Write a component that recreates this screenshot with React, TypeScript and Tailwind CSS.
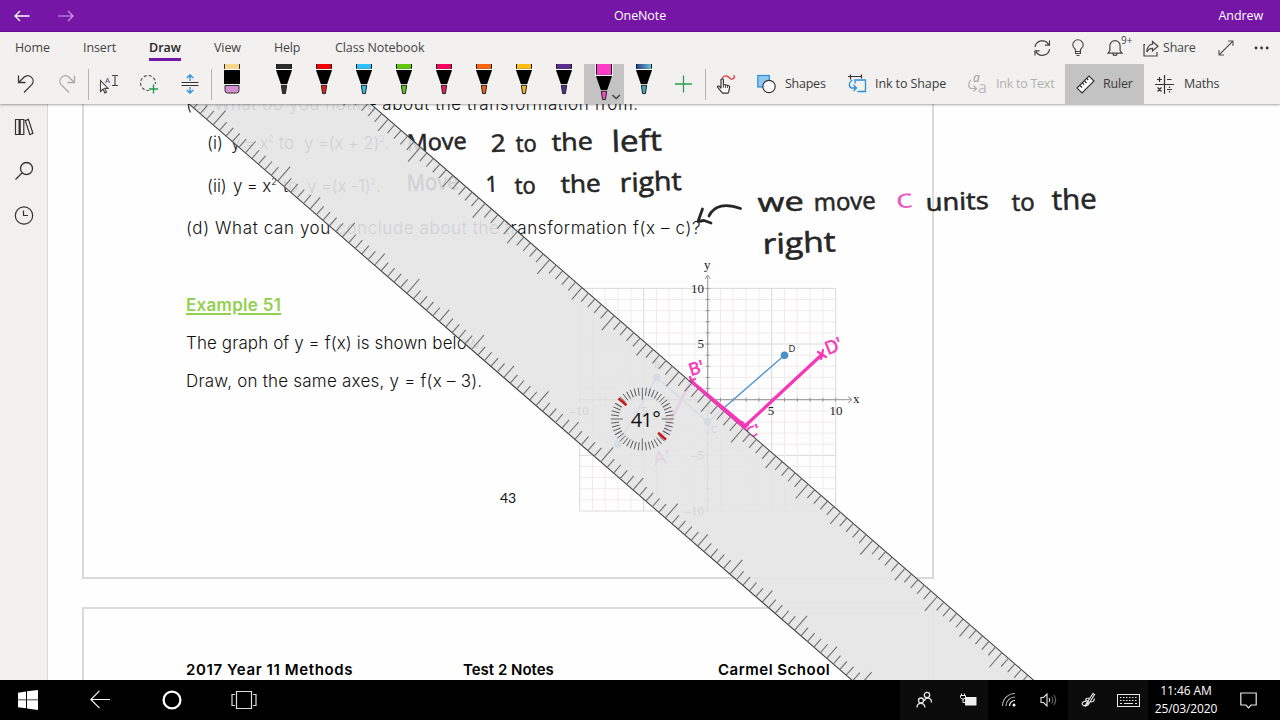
import React from 'react'

interface InkWord {
  text: string
  x: number
  y: number
  width: number
  size?: number
  color?: string
  rotate?: number
}

const INK = '#262626'
const PINK = '#f537b8'

const tabs = [
  { label: 'Home', className: 'w-[68px] tracking-[-0.1px]' },
  { label: 'Insert', className: 'w-[66px] tracking-[-0.1px]' },
  { label: 'Draw', className: 'w-[65px] font-semibold text-[#262626]' },
  { label: 'View', className: 'w-[60px] tracking-[-0.1px]' },
  { label: 'Help', className: 'w-[61px] tracking-[-0.2px]' },
  { label: 'Class Notebook', className: 'w-[100px] tracking-[-0.1px]' },
]

const pens = [
  { cap: '#2b2b2b', tip: '#333333' },
  { cap: '#f40000', tip: '#e0201c' },
  { cap: '#2fc1fb', tip: '#35bdf0' },
  { cap: '#5fc80c', tip: '#63c41b' },
  { cap: '#f7005e', tip: '#e21f62' },
  { cap: '#f9650c', tip: '#e9601a' },
  { cap: '#fdbd10', tip: '#f0b429' },
  { cap: '#5b2d90', tip: '#54308a' },
  { cap: '#ff3cc8', tip: '#f04fc0', selected: true },
  { cap: 'url(#galaxy)', tip: '#3ea7bb' },
]

const inkWords: InkWord[] = [
  { text: 'Move', x: 407, y: 151, width: 60, size: 23 },
  { text: '2', x: 491, y: 152, width: 15, size: 24 },
  { text: 'to', x: 516, y: 152, width: 21, size: 23 },
  { text: 'the', x: 552, y: 151, width: 41 },
  { text: 'left', x: 612, y: 152, width: 50, size: 29 },
  { text: 'Move', x: 407, y: 191, width: 52, size: 23 },
  { text: '1', x: 486, y: 192, width: 12, size: 22 },
  { text: 'to', x: 515, y: 194, width: 21, size: 23 },
  { text: 'the', x: 561, y: 193, width: 40 },
  { text: 'right', x: 620, y: 192, width: 62, size: 26 },
  { text: 'we', x: 758, y: 212, width: 46, size: 26 },
  { text: 'move', x: 814, y: 211, width: 62, size: 24 },
  { text: 'c', x: 896, y: 208, width: 17, size: 26, color: '#e85cc4' },
  { text: 'units', x: 926, y: 211, width: 63, size: 24 },
  { text: 'to', x: 1012, y: 211, width: 23 },
  { text: 'the', x: 1052, y: 210, width: 45, size: 28 },
  { text: 'right', x: 763, y: 254, width: 73, size: 28 },
  { text: "D'", x: 828, y: 355, width: 17, size: 18, color: PINK, rotate: -22 },
  { text: "B'", x: 691, y: 376, width: 15, size: 17, color: PINK, rotate: -18 },
  { text: "C'", x: 748, y: 439, width: 15, size: 14, color: PINK, rotate: -25 },
  { text: "A'", x: 655, y: 465, width: 16, size: 18, color: PINK, rotate: -10 },
]

function Pen({ cap, tip, selected }: { cap: string; tip: string; selected?: boolean }) {
  const d = selected ? 6 : 0
  return (
    <div className={selected ? 'h-10 w-10 bg-[#c3c3c3]' : 'h-10 w-10'}>
      <svg width="40" height="40" viewBox="0 0 40 40">
        <rect x="11" y="0" width="18" height={6 + d} fill="#fff" opacity="0.8" />
        <rect x="12" y="0" width="16" height={4.8 + d} fill="#111" />
        <rect x="13" y="0" width="14" height={4.8 + d} fill={cap} />
        <path d={`M12 ${6 + d}H28L23.2 ${20 + d}H16.8Z`} fill="#000" />
        <path d={`M17.3 ${21.3 + d}H22.7L21.4 ${29.6 + d}H18.6Z`} fill={tip} stroke="#222" strokeWidth="1" />
        {selected && <path d="M28.5 31l3.7 3.7 3.7-3.7" fill="none" stroke="#333" strokeWidth="1.3" />}
      </svg>
    </div>
  )
}

function Separator({ className = '' }: { className?: string }) {
  return <div className={`h-[31px] w-px bg-[#b5b5b5] ${className}`} />
}

function TitleBar() {
  return (
    <header className="flex h-8 shrink-0 items-center border-b border-[#640f92] bg-[#7616a7] text-[12.5px] text-white">
      <div className="flex w-[200px] items-center pl-3.5">
        <svg width="16" height="12" viewBox="0 0 16 12" fill="none" stroke="#fff" strokeWidth="1.3">
          <path d="M15.5 6H1M6 1L1 6l5 5" />
        </svg>
        <svg className="ml-7" width="16" height="12" viewBox="0 0 16 12" fill="none" stroke="#cf9fe6" strokeWidth="1.2">
          <path d="M0 6h14.5M10 1l5 5-5 5" />
        </svg>
      </div>
      <div className="flex-1 pt-0.5 text-center tracking-[-0.1px]">OneNote</div>
      <div className="w-[200px] pr-[17px] pt-0.5 text-right tracking-[-0.1px]">Andrew</div>
    </header>
  )
}

function TabRow() {
  return (
    <nav className="flex h-8 items-center justify-between text-[12.5px] text-[#444]">
      <div className="flex pl-[15px] pt-px">
        {tabs.map((tab) => (
          <div key={tab.label} className={`whitespace-nowrap ${tab.className}`}>
            <span className={tab.label === 'Draw' ? 'relative after:absolute after:-bottom-[5px] after:left-0 after:h-[3px] after:w-full after:bg-[#7316a5]' : ''}>
              {tab.label}
            </span>
          </div>
        ))}
      </div>
      <div className="flex h-8 w-[248px] items-center">
        <svg width="20" height="18" viewBox="0 0 20 18" fill="none" stroke="#444" strokeWidth="1.2">
          <path d="M3 8a7.3 7.3 0 0 1 13.6-2.4M17.5 1.5v4.6h-4.6M17.6 10A7.3 7.3 0 0 1 4 12.6M3 16.5v-4.6h4.6" />
        </svg>
        <svg className="ml-[18px]" width="16" height="18" viewBox="0 0 16 18" fill="none" stroke="#444" strokeWidth="1.1">
          <path d="M5.5 12.5v-2C4 9 2.8 8.2 2.8 6a5.2 5.2 0 0 1 10.4 0c0 2.2-1.2 3-2.7 4.5v2zM5.5 12.5v2h5v-2M6.5 16.5h3" />
        </svg>
        <div className="relative ml-[21px] h-[18px] w-4">
          <svg width="16" height="18" viewBox="0 0 16 18" fill="none" stroke="#444" strokeWidth="1.2">
            <path d="M1 14.2h14l-1.9-2.7V6.8a5.1 5.1 0 0 0-10.2 0v4.7zM6 14.5a2 2 0 0 0 4 0" />
          </svg>
          <span className="absolute -top-[5px] left-[14px] text-[10px] leading-[12px]">9+</span>
        </div>
        <svg className="ml-5" width="17" height="17" viewBox="0 0 17 17" fill="none" stroke="#444" strokeWidth="1.2">
          <path d="M2 4.5H1V16h13v-4M9.5 1.5l5.5 4.7-5.5 4.7V8.3C7 8.3 5 9.5 3.8 12c0-4.5 2.5-7.6 5.7-7.8z" />
        </svg>
        <span className="ml-[3px] tracking-[-0.2px]">Share</span>
        <svg className="ml-[22px]" width="16" height="16" viewBox="0 0 16 16" fill="none" stroke="#555" strokeWidth="1.1">
          <path d="M1 15L15 1M10 1h5v5M1 10v5h5" />
        </svg>
        <svg className="ml-5" width="16" height="4" viewBox="0 0 16 4" fill="#333">
          <circle cx="2" cy="2" r="1.4" />
          <circle cx="7.6" cy="2" r="1.4" />
          <circle cx="13.2" cy="2" r="1.4" />
        </svg>
      </div>
    </nav>
  )
}

function Tool({ children, className = 'w-10' }: { children: React.ReactNode; className?: string }) {
  return <div className={`flex h-10 items-center justify-center ${className}`}>{children}</div>
}

function Toolbar() {
  return (
    <div className="flex h-10 items-center pl-[6px] text-[12.5px] text-[#3a3a3a]">
      <Tool>
        <svg width="18" height="20" viewBox="0 0 18 20" fill="none" stroke="#3a3a3a" strokeWidth="1.3">
          <path d="M1.5 1.5v7h7M1.8 8.2L7 3.2a5.4 5.4 0 0 1 8 7.2L7 18.5" />
        </svg>
      </Tool>
      <Tool className="w-[42px]">
        <svg width="18" height="20" viewBox="0 0 18 20" fill="none" stroke="#a9a9a9" strokeWidth="1.3">
          <path d="M16.5 1.5v7h-7M16.2 8.2L11 3.2a5.4 5.4 0 0 0-8 7.2l8 8.1" />
        </svg>
      </Tool>
      <Separator />
      <Tool className="w-[39px]">
        <svg width="20" height="20" viewBox="0 0 20 20" fill="none" stroke="#444" strokeWidth="1.1">
          <path d="M1.5 6.5v11l2.6-2.5 1.8 4 1.6-.8-1.8-3.8h3.4z" fill="#fff" />
          <path d="M13 1.5h2.3q.7 0 .7.7v8.6q0 .7-.7.7H13M19 1.5h-2.3q-.7 0-.7.7v8.6q0 .7.7.7H19" />
          <text x="6" y="9" fontSize="8" fill="#444" stroke="none">A</text>
        </svg>
      </Tool>
      <Tool className="w-[42px]">
        <svg width="20" height="20" viewBox="0 0 20 20" fill="none">
          <circle cx="9" cy="9" r="7.5" stroke="#555" strokeWidth="1.2" strokeDasharray="3.2 1.9" />
          <path d="M10 10h10v10H10z" fill="#f2f1f0" />
          <path d="M14.5 10.5v9M10 15h9" stroke="#1f9a45" strokeWidth="1.4" />
        </svg>
      </Tool>
      <Tool className="w-[39px]">
        <svg width="18" height="20" viewBox="0 0 18 20" fill="none">
          <path d="M.5 8.5h17M.5 11.5h17" stroke="#333" strokeWidth="1.1" />
          <path d="M9 7V1M5.8 4L9 1l3.2 3M9 13v6M5.8 16L9 19l3.2-3" stroke="#2b8fd6" strokeWidth="1.3" />
        </svg>
      </Tool>
      <Separator className="ml-[2px]" />
      <svg width="40" height="40" viewBox="0 0 40 40">
        <rect x="12" y="0" width="16" height="5" fill="#333" />
        <rect x="13" y="0" width="14" height="5" fill="#f6d58c" />
        <rect x="12" y="5" width="16" height="1" fill="#fff" />
        <rect x="12" y="6" width="16" height="14" fill="#000" />
        <path d="M13 21.5h14v5q0 2.5-2.5 2.5h-9Q13 29 13 26.5z" fill="#d48fd2" stroke="#333" strokeWidth="1" />
      </svg>
      <div className="ml-3 flex">
        {pens.map((pen) => (
          <Pen key={pen.cap} {...pen} />
        ))}
      </div>
      <Tool className="w-[39px]">
        <svg width="17" height="18" viewBox="0 0 17 18" stroke="#2aa14f" strokeWidth="1.3">
          <path d="M8.5.5v17M0 9h17" />
        </svg>
      </Tool>
      <Separator className="ml-[2px]" />
      <Tool>
        <svg width="20" height="20" viewBox="0 0 20 20" fill="none" strokeLinejoin="round" strokeLinecap="round">
          <path d="M6.5 3.8C9 .5 12 2 14 4.2s5.5-.2 4-2.7" stroke="#e2474b" strokeWidth="1.4" />
          <path d="M5 14V6a1.2 1.2 0 0 1 2.4 0v4.5l5 1q1.3.3 1.2 1.7l-.7 4-1 2H6.5l-5-6q0-1.7 1.7-1z" fill="#fff" stroke="#333" strokeWidth="1.2" />
          <path d="M7.4 10.5v3M9.5 11v2.5M11.5 11.5v2" stroke="#333" strokeWidth=".9" />
        </svg>
      </Tool>
      <div className="ml-[11px] flex w-[91px] items-center">
        <svg width="19" height="20" viewBox="0 0 19 20">
          <rect x=".8" y="1.5" width="11.5" height="11.5" fill="#8fc6f2" stroke="#2b8fd6" strokeWidth="1.2" />
          <circle cx="12" cy="12.5" r="6.2" fill="#fff" stroke="#333" strokeWidth="1.2" />
        </svg>
        <span className="ml-[9px] tracking-[-0.25px]">Shapes</span>
      </div>
      <div className="flex w-[120px] items-center whitespace-nowrap">
        <svg width="19" height="20" viewBox="0 0 19 20" fill="none">
          <path d="M0 2.5h14M2.5 .5v5M13.5 .5v4" stroke="#333" strokeWidth="1.2" />
          <path d="M7 9.5V6h10.5v11.5H9.5M4.5 6C1 7.5 0 13 3.5 14H8M5.5 11l3 3-3 3" stroke="#2b8fd6" strokeWidth="1.3" />
        </svg>
        <span className="ml-2 tracking-[-0.1px]">Ink to Shape</span>
      </div>
      <div className="flex w-[97px] items-center whitespace-nowrap text-[#b1b0af]">
        <svg className="overflow-visible" width="20" height="20" viewBox="0 0 20 20" fill="none">
          <text x="5" y="7.5" fontSize="12" fontStyle="italic" fill="#999">a</text>
          <text x="10" y="18.5" fontSize="16" fill="#bbb">a</text>
          <path d="M3 6C.3 7.5-.2 13.5 3 14.5H8M5.5 11.5l3 3-3 3" stroke="#b1b0af" strokeWidth="1.2" />
        </svg>
        <span className="ml-2 tracking-[-0.25px]">Ink to Text</span>
      </div>
      <div className="flex h-10 w-[79px] items-center bg-[#c3c3c3] pl-[11px]">
        <svg width="19" height="19" viewBox="0 0 19 19" fill="#fff" stroke="#333" strokeWidth="1.2">
          <path d="M1 13L13 1l5 5L6 18z" />
          <path d="M4 10.5l2 2M6.5 8l1.5 1.5M8.5 6l2 2M10.8 3.5L12.3 5" />
        </svg>
        <span className="ml-2 tracking-[-0.2px]">Ruler</span>
      </div>
      <div className="ml-[11px] flex items-center">
        <svg width="19" height="19" viewBox="0 0 19 19" fill="none" stroke="#333" strokeWidth="1.2">
          <path d="M9.5 0v19M0 9.5h19M2 4.5h5M4.5 2v5M12 4.5h4.5M2.5 12.5l4 4M6.5 12.5l-4 4M12 14.5h5M14.5 11.5v1.5M14.5 16v1.5" />
        </svg>
        <span className="ml-[10px] tracking-[-0.2px]">Maths</span>
      </div>
    </div>
  )
}

function Sidebar() {
  return (
    <aside className="flex w-12 shrink-0 flex-col items-center gap-6 border-r border-[#d8d8d8] bg-[#f1f0ef] pt-[13px]">
      <svg width="20" height="20" viewBox="0 0 20 20" fill="none" stroke="#333" strokeWidth="1.2">
        <path d="M1.5 2.5h3.6v15H1.5zM6.2 2.5h3.6v15H6.2zM11.3 3.6l3.1-1.2 4.5 13.9-3.1 1.2z" />
      </svg>
      <svg width="20" height="20" viewBox="0 0 20 20" fill="none" stroke="#333" strokeWidth="1.3">
        <circle cx="12.5" cy="7.5" r="6" />
        <path d="M8 12l-6.5 6.5" />
      </svg>
      <svg width="20" height="20" viewBox="0 0 20 20" fill="none" stroke="#333" strokeWidth="1.2">
        <circle cx="10" cy="10.5" r="8.7" />
        <path d="M9.5 5.5v5h4.5" />
      </svg>
    </aside>
  )
}

function Line({ children, className }: { children: React.ReactNode; className: string }) {
  return <p className={`h-5 whitespace-pre text-[17px] font-light leading-5 ${className}`}>{children}</p>
}

function Sup() {
  return <span className="relative -top-[7px] text-[9px]">2</span>
}

function NotePages() {
  return (
    <div className="flex flex-col pl-[34px] font-[Inter,sans-serif] text-[#111]">
      <section className="h-[475px] w-[852px] border-2 border-t-0 border-[#dadadc] pl-[102px]">
        <Line className="-mt-[10px] tracking-[0.55px]">(c) What do you notice about the transformation from:</Line>
        <Line className="mt-[19px] flex pl-[21px]">
          <span className="w-[24px]">(i)</span>
          <span className="w-[48px] tracking-[-0.4px]">y = x<Sup /></span>
          <span className="w-[25px]">to</span>
          <span className="tracking-[-0.2px]">y =(x + 2)<Sup />.</span>
        </Line>
        <Line className="mt-[23px] flex pl-[21px]">
          <span className="w-[26px]">(ii)</span>
          <span className="w-[50px] tracking-[-0.2px]">y = x<Sup /></span>
          <span className="w-[24px]">to</span>
          <span className="tracking-[-0.2px]">y =(x -1)<Sup />.</span>
        </Line>
        <Line className="mt-[22px] tracking-[0.6px]">(d) What can you conclude about the transformation f(x – c)?</Line>
        <Line className="mt-[57px] tracking-[0.3px]">
          <span className="font-semibold text-[#92d050] underline decoration-2 underline-offset-2">Example 51</span>
        </Line>
        <Line className="mt-[18px] tracking-[0.1px]">The graph of y = f(x) is shown below.</Line>
        <Line className="mt-[18px] tracking-[0.22px]">Draw, on the same axes, y = f(x – 3).</Line>
        <p className="mt-[97px] pl-[314px] font-[Lato,sans-serif] text-[14px] leading-5">43</p>
      </section>
      <section className="mt-[28px] flex h-[80px] w-[852px] border-2 border-[#dadadc] pl-[102px] pt-[51px] text-[15px] font-semibold leading-5 text-black">
        <span className="w-[277px] tracking-[0.6px]">2017 Year 11 Methods</span>
        <span className="w-[255px]">Test 2 Notes</span>
        <span className="tracking-[0.5px]">Carmel School</span>
      </section>
    </div>
  )
}

// Origin at (707.7, 399.7), 12.8px per unit across and 11.13px per unit up
const gx = (n: number) => 707.7 + n * 12.8
const gy = (n: number) => 399.7 - n * 11.13

function Graph() {
  const units = Array.from({ length: 21 }, (_, i) => i - 10)
  return (
    <g>
      {units.map((n) => (
        <g key={n} stroke={n % 5 === 0 ? '#dcd8d8' : '#f0ebeb'} strokeWidth="1">
          <path d={`M${gx(n)} ${gy(10)}V${gy(-10)}`} />
          <path d={`M${gx(-10)} ${gy(n)}H${gx(10)}`} />
        </g>
      ))}
      <g stroke="#959595" fill="none">
        {units.map((n) => (
          <path key={n} d={`M${gx(n)} ${gy(0) - 2}v4M${gx(0) - 2} ${gy(n)}h4`} />
        ))}
        <path d={`M${gx(-10)} ${gy(0)}H851M848 ${gy(0) - 3}l4 3-4 3`} />
        <path d={`M${gx(0)} ${gy(-10)}V276M705 279l2.7-4 2.7 4`} />
      </g>
      <g fontFamily="Liberation Serif, serif" fontSize="13" fill="#222">
        <text x="704" y="269">y</text>
        <text x="853" y="403">x</text>
        <text x="704" y="293" textAnchor="end">10</text>
        <text x="704" y="348" textAnchor="end">5</text>
        <text x="704" y="459" textAnchor="end">–5</text>
        <text x="704" y="515" textAnchor="end">–10</text>
        <text x="771" y="415" textAnchor="middle">5</text>
        <text x="836" y="415" textAnchor="middle">10</text>
        <text x="641" y="415" textAnchor="middle">–5</text>
        <text x="579" y="415" textAnchor="middle">–10</text>
      </g>
      <path
        d={`M${gx(-7)} ${gy(-4)}L${gx(-4)} ${gy(2)}L${gx(0)} ${gy(-2)}L${gx(6)} ${gy(4)}`}
        fill="none"
        stroke="#5a9bd0"
        strokeWidth="1.4"
      />
      {[[-7, -4], [-4, 2], [0, -2], [6, 4]].map(([x, y]) => (
        <circle key={x} cx={gx(x)} cy={gy(y)} r="3.8" fill="#4a8fc6" />
      ))}
      <g fontFamily="Open Sans, sans-serif" fontSize="9.5" fill="#222">
        <text x="788.5" y="352">D</text>
        <text x="654" y="368">B</text>
        <text x="711" y="433">C</text>
      </g>
    </g>
  )
}

function Ruler() {
  const ticks = Array.from({ length: 181 }, (_, i) => i - 90)
  const dial = Array.from({ length: 48 }, (_, i) => i * 7.5).filter((a) => a !== 127.5 && a !== 307.5)
  return (
    <g transform="translate(642.3 419)">
      <g transform="rotate(41)">
        <rect x="-800" y="-59.6" width="1600" height="119.2" fill="#e4e4e5" fillOpacity="0.9" />
        <path d="M-800-59.6H800M-800 59.6H800" stroke="#3a3a3a" strokeWidth="1" />
        {ticks.map((n) => {
          const x = -3.3 + n * 8.56
          const len = n % 10 === 0 ? 19 : n % 5 === 0 ? 15.5 : 11
          return <path key={n} d={`M${x} -59.6v${len}M${x} 59.6v${-len}`} stroke="#707070" strokeWidth="1.1" />
        })}
      </g>
      {dial.map((a) => (
        <path key={a} d={a % 90 === 0 ? 'M0-31.5v12' : 'M0-31.5v8'} transform={`rotate(${a})`} stroke="#555" strokeWidth="0.9" />
      ))}
      <path d="M-31.5 0h10.5M31.5 0h-10.5" transform="rotate(41)" stroke="#c81414" strokeWidth="2.4" />
      <text x="-11.5" y="8" fontSize="20" fontFamily="Open Sans, sans-serif" fill="#111" textLength="22">41</text>
      <text x="10" y="7" fontSize="20" fontFamily="Open Sans, sans-serif" fill="#111">°</text>
    </g>
  )
}

function InkLayer() {
  return (
    <svg className="absolute left-0 top-0" width="1232" height="576" viewBox="48 104 1232 576">
      <Graph />
      <g fontFamily="Open Sans, sans-serif" fontWeight="500" strokeWidth="0.6" strokeLinejoin="round">
        {inkWords.map((w) => (
          <text
            key={`${w.x}-${w.y}`}
            x={w.x}
            y={w.y}
            fontSize={w.size ?? 24}
            fill={w.color ?? INK}
            stroke={w.text === 'c' ? 'none' : w.color ?? INK}
            textLength={w.width}
            lengthAdjust="spacingAndGlyphs"
            transform={`rotate(${w.rotate ?? -2} ${w.x} ${w.y})`}
          >
            {w.text}
          </text>
        ))}
      </g>
      <g fill="none" stroke={INK} strokeWidth="2.8" strokeLinecap="round" strokeLinejoin="round">
        <path d="M740.5 208.5C726 203 714 205 709 216" />
        <path d="M702.5 209L698 221.5L704 220.5L711 223" />
      </g>
      <g fill="none" stroke={PINK} strokeWidth="3.2" strokeLinecap="round" strokeLinejoin="round">
        <path d="M660 441L691 381L745 426L822 354.5" />
        <path d="M690 377l3 7M695 379l-6 3M742 422l4 5M742 428l6-3M818 352l8 5M823 350l-2 9" strokeWidth="2.2" />
      </g>
      <Ruler />
      <path d="M692 382.5L745.5 429" stroke={PINK} strokeWidth="2" />
    </svg>
  )
}

function Taskbar() {
  return (
    <footer className="flex h-10 shrink-0 items-center justify-between bg-black text-white">
      <div className="flex items-center pl-[18px]">
        <svg width="20" height="20" viewBox="0 0 20 20" fill="#fff">
          <path d="M0 2.8L8 1.5v7.9H0zM9 1.3L20 0v9.4H9zM0 10.3h8v8L0 17.2zM9 10.3h11V20L9 18.5z" />
        </svg>
        <svg className="ml-[52px]" width="20" height="20" viewBox="0 0 20 20" fill="none" stroke="#fff" strokeWidth="1.1">
          <path d="M20 9.5H.8M9.5.8L.8 9.5l8.7 8.7" />
        </svg>
        <svg className="ml-[52px]" width="20" height="20" viewBox="0 0 20 20" fill="none" stroke="#fff" strokeWidth="2.3">
          <circle cx="10" cy="10" r="8.4" />
        </svg>
        <svg className="ml-[49px]" width="26" height="20" viewBox="0 0 26 20" fill="none" stroke="#ddd" strokeWidth="1.2">
          <path d="M5.5 1.5h15v17h-15zM4 4.5H1v11h3M22 4.5h3v11h-3" />
        </svg>
      </div>
      <div className="flex h-10 items-center">
        <div className="flex h-10 w-[88px] items-center bg-[#0b0b0b] pl-4">
          <svg width="17" height="18" viewBox="0 0 17 18" fill="none" stroke="#e8e8e8" strokeWidth="1.3">
            <circle cx="11" cy="4" r="2.7" />
            <circle cx="5" cy="9.5" r="2.5" />
            <path d="M8.5 10c.5-4 7-4 7 1.5M1 16.5c0-5.5 7.5-5.5 8 0" />
          </svg>
          <svg className="ml-[27px]" width="17" height="14" viewBox="0 0 17 14">
            <rect x="5" y="4" width="11.5" height="8.5" fill="#eee" />
            <path d="M1.5 .5v2M4.5 .5v2M.5 2.5h5v2l-1.5 1.5h-2L.5 4.5zM3 6v3.5h2" fill="none" stroke="#eee" />
          </svg>
        </div>
        <div className="flex w-20 items-center pl-[13px]">
          <svg width="16" height="16" viewBox="0 0 16 16" fill="none" strokeWidth="1.2">
            <path d="M1.5 14A12.5 12.5 0 0 1 14 1.5M5 14a9 9 0 0 1 9-9" stroke="#aaa" />
            <path d="M8.5 14A5.5 5.5 0 0 1 14 8.5" stroke="#fff" />
            <circle cx="13" cy="13" r="1.5" fill="#fff" />
          </svg>
          <svg className="ml-[23px]" width="17" height="14" viewBox="0 0 17 14" fill="none" stroke="#e8e8e8" strokeWidth="1.1">
            <path d="M1 4.5h2.5L7 1v12L3.5 9.5H1z" />
            <path d="M9 5q1.5 2 0 4" />
            <path d="M11.5 3.5q2.8 3.5 0 7M13.8 2q3.8 5 0 10" stroke="#666" />
          </svg>
        </div>
        <div className="flex h-10 w-20 items-center bg-[#0b0b0b] pl-[13px]">
          <svg width="15" height="16" viewBox="0 0 15 16" fill="none" stroke="#e8e8e8" strokeWidth="1.2">
            <path d="M5 12L12 1.5l1.5 1L7 13l-2.5 1zM8 6C4 6 4 9 6.5 9S5 14.5 2.5 13.5 1 9 5 9.5M9 9.5c3 1 5-1 4-3" />
          </svg>
          <svg className="ml-[21px]" width="23" height="13" viewBox="0 0 23 13" fill="none" stroke="#e8e8e8">
            <rect x=".5" y=".5" width="22" height="12" />
            <path d="M3 3.5h17M3 6.5h17" strokeDasharray="1.5 1.5" />
            <path d="M3 9.5h2M7 9.5h9M18 9.5h2" />
          </svg>
        </div>
        <div className="w-[76px] text-center text-[12px] leading-[18px] tracking-[-0.1px]">
          <div>11:46 AM</div>
          <div>25/03/2020</div>
        </div>
        <svg className="ml-4 mr-[23px]" width="17" height="17" viewBox="0 0 17 17" fill="none" stroke="#e8e8e8" strokeWidth="1.2">
          <path d="M.8 1h15.4v12H11l-2.5 2.8L6 13H.8z" />
        </svg>
      </div>
    </footer>
  )
}

export default function App() {
  return (
    <div className="flex h-[720px] w-[1280px] flex-col overflow-hidden bg-white font-['Open_Sans',sans-serif]">
      <svg width="0" height="0" className="absolute">
        <defs>
          <linearGradient id="galaxy">
            <stop offset="0" stopColor="#1d4f86" />
            <stop offset="0.5" stopColor="#5279b4" />
            <stop offset="1" stopColor="#63c7cf" />
          </linearGradient>
        </defs>
      </svg>
      <TitleBar />
      <div className="z-10 h-[72px] shrink-0 bg-[#f2f1f0] shadow-[0_1px_2px_rgba(0,0,0,0.35)]">
        <TabRow />
        <Toolbar />
      </div>
      <div className="flex h-[576px] shrink-0">
        <Sidebar />
        <main className="relative flex-1 overflow-hidden bg-[#fefefe]">
          <NotePages />
          <InkLayer />
        </main>
      </div>
      <Taskbar />
    </div>
  )
}
